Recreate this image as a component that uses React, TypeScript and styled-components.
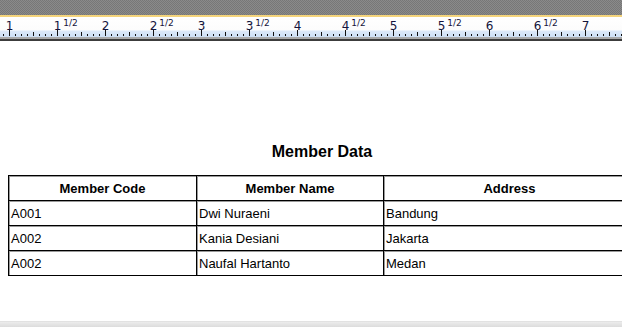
import React from "react";
import styled, { createGlobalStyle } from "styled-components";

const Global = createGlobalStyle`
  html, body { margin: 0; padding: 0; background: #ffffff; overflow: hidden; }
  body { width: 622px; height: 327px; }
`;

const Page = styled.div`
  width: 622px;
  height: 327px;
  display: flex;
  flex-direction: column;
  overflow: hidden;
  background: #ffffff;
`;

const TopBand = styled.div`
  height: 15px;
  flex: none;
  background-color: #808080;
  background-image: repeating-conic-gradient(#8a8a8a 0 25%, #777777 0 50%);
  background-size: 2px 2px;
`;

const Ruler = styled.div`
  position: relative;
  flex: none;
  height: 20px;
  border-top: 2px solid #f4d47c;
  background: linear-gradient(
    to bottom,
    #ffffff 0,
    #fcfcfc 13px,
    #dce9f8 14px,
    #cde0f5 20px
  );
`;

const RulerEdge = styled.div`
  flex: none;
  height: 2px;
  background: #a9a9a9;
  border-bottom: 2px solid #3c3c3c;
`;

const Ticks = styled.svg`
  position: absolute;
  left: 0;
  top: 0;
  display: block;
`;

const Label = styled.span`
  position: absolute;
  top: 3px;
  transform: translateX(-50%);
  font-family: "DejaVu Sans", Verdana, sans-serif;
  font-size: 12px;
  line-height: 13px;
  color: #14143c;
  white-space: nowrap;
`;

const Half = styled.span`
  position: absolute;
  left: 100%;
  top: -2px;
  margin-left: 2px;
  font-size: 9px;
  line-height: 10px;
`;

const Sheet = styled.div`
  flex: 1;
  display: flex;
  flex-direction: column;
  padding-top: 101px;
  background: #ffffff;
`;

const Report = styled.div`
  width: 628px;
  margin-left: 8px;
  display: flex;
  flex-direction: column;
`;

const Title = styled.div`
  font-family: "Liberation Sans", Arial, sans-serif;
  font-weight: bold;
  font-size: 16px;
  line-height: 20px;
  color: #000;
  text-align: center;
  margin-bottom: 13px;
`;

const Table = styled.table`
  width: 628px;
  border-collapse: separate;
  border-spacing: 0;
  table-layout: fixed;
  border-top: 1px solid #000;
  border-left: 1px solid #000;
  font-family: "Liberation Sans", Arial, sans-serif;
  font-size: 13px;
  color: #000;
`;

const cellBase = `
  height: 25px;
  border-right: 1px solid #000;
  border-bottom: 1px solid #000;
  box-shadow: inset 1px 1px 0 #9a9a9a;
  vertical-align: middle;
  box-sizing: border-box;
`;

const Th = styled.th<{ $w: number }>`
  ${cellBase}
  width: ${(p) => p.$w}px;
  padding: 0;
  font-weight: bold;
  text-align: center;
`;

const Td = styled.td`
  ${cellBase}
  padding: 0 0 0 2px;
  text-align: left;
  white-space: nowrap;
`;

const BottomBar = styled.div`
  flex: none;
  height: 5px;
  background: linear-gradient(to bottom, #ececec, #dcdcdc);
  border-top: 1px solid #e2e2e2;
`;

const labels: { x: number; n: number; half: boolean }[] = [];
for (let i = 0; i < 13; i++) {
  labels.push({ x: 9 + i * 48, n: Math.floor(i / 2) + 1, half: i % 2 === 1 });
}

const ticks: { x: number; h: number }[] = [];
for (let x = 3; x <= 622; x += 6) {
  const k = (((x - 9) / 6) % 16 + 16) % 16;
  let h = 2;
  if (k === 0 || k === 8) h = 6;
  else if (k === 4 || k === 12) h = 4;
  ticks.push({ x, h });
}

const rows = [
  ["A001", "Dwi Nuraeni", "Bandung"],
  ["A002", "Kania Desiani", "Jakarta"],
  ["A002", "Naufal Hartanto", "Medan"],
];

export default function App() {
  return (
    <Page>
      <Global />
      <TopBand />
      <Ruler>
        <Ticks width={622} height={20} viewBox="0 0 622 20">
          {ticks.map((t) => (
            <line
              key={t.x}
              x1={t.x + 0.5}
              x2={t.x + 0.5}
              y1={19 - t.h}
              y2={19}
              stroke="#111"
              strokeWidth={1}
            />
          ))}
        </Ticks>
        {labels.map((l) => (
          <Label key={l.x} style={{ left: l.x + 0.5 }}>
            {l.n}
            {l.half && <Half>1/2</Half>}
          </Label>
        ))}
      </Ruler>
      <RulerEdge />
      <Sheet>
        <Report>
          <Title>Member Data</Title>
          <Table>
            <thead>
              <tr>
                <Th $w={188}>Member Code</Th>
                <Th $w={187}>Member Name</Th>
                <Th $w={252}>Address</Th>
              </tr>
            </thead>
            <tbody>
              {rows.map((r, i) => (
                <tr key={i}>
                  {r.map((c, j) => (
                    <Td key={j}>{c}</Td>
                  ))}
                </tr>
              ))}
            </tbody>
          </Table>
        </Report>
      </Sheet>
      <BottomBar />
    </Page>
  );
}
